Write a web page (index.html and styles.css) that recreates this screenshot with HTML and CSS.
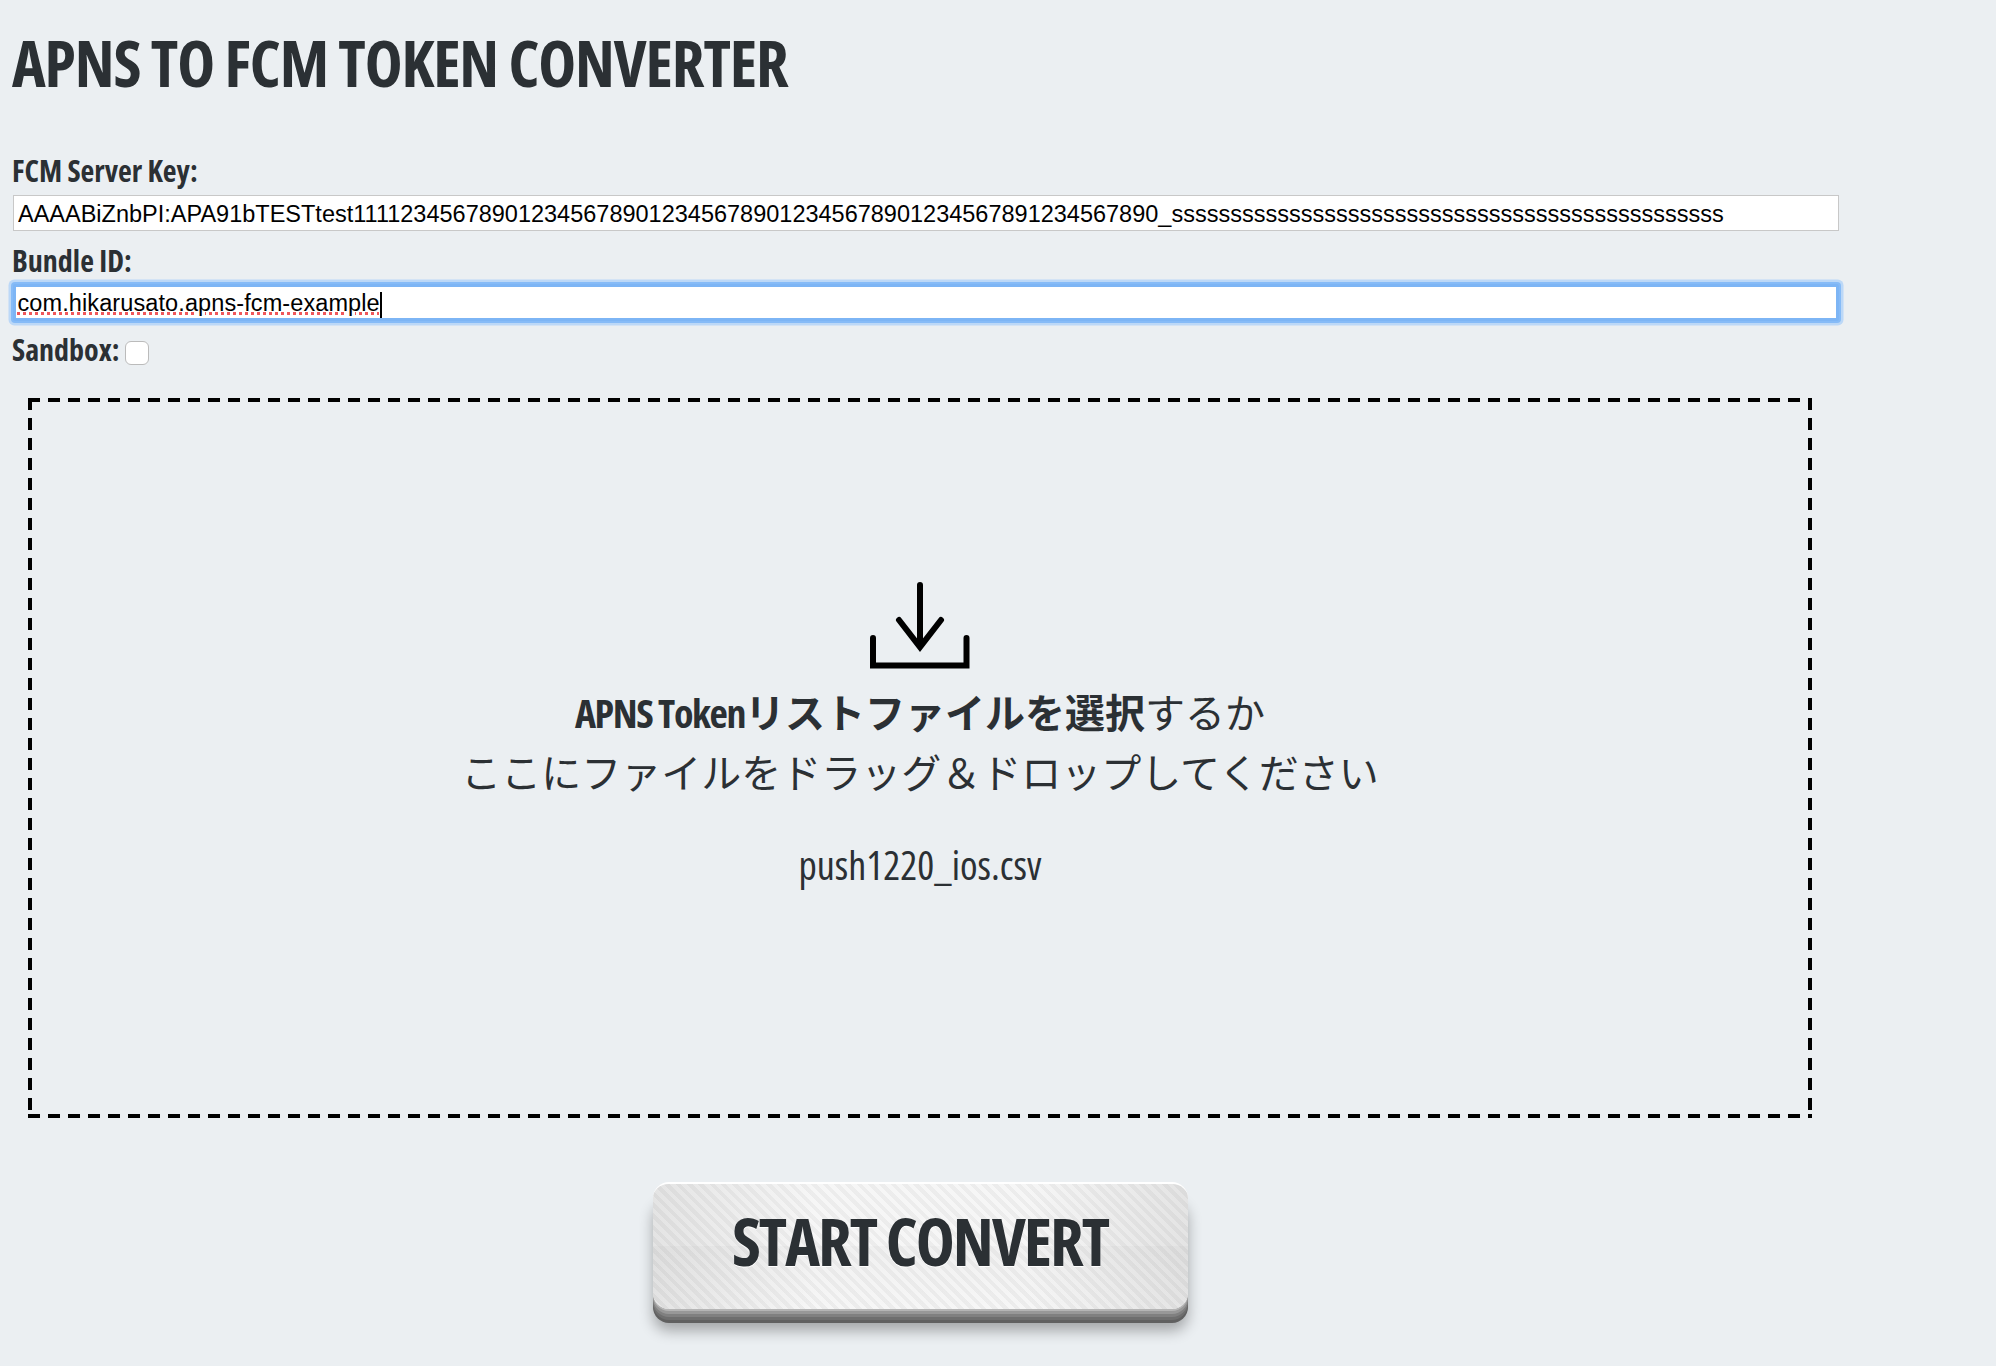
FILE: index.html
```html
<!DOCTYPE html>
<html lang="en">
<head>
    <meta charset="UTF-8">
    <title>APNS to FCM Token Converter</title>
    <link rel="stylesheet" href="styles.css">
</head>
<body>

    <h1>APNS TO FCM TOKEN CONVERTER</h1>

    <form class="converter">
        <label class="field-label" for="server-key">FCM Server Key:</label>
        <input class="text-input" type="text" id="server-key" value="AAAABiZnbPI:APA91bTESTtest11112345678901234567890123456789012345678901234567891234567890_sssssssssssssssssssssssssssssssssssssssssssssss">

        <label class="field-label bundle-label">Bundle ID:</label>
        <div class="text-input focused"><span class="misspelled">com.hikarusato.apns-fcm-example</span><span class="caret"></span></div>

        <div class="sandbox-row">
            <label class="field-label" for="sandbox">Sandbox:</label>
            <input class="sandbox-check" type="checkbox" id="sandbox">
        </div>

        <div class="drop-zone">
            <svg class="drop-icon" width="100" height="87" viewBox="0 0 100 87">
                <path d="M50 3V64M29 38L50 65L71 38" fill="none" stroke="#000" stroke-width="6" stroke-linecap="round"/>
                <path d="M3 56V83.500H96.500V56" fill="none" stroke="#000" stroke-width="6" stroke-linecap="round"/>
            </svg>
            <p class="drop-text"><b><span class="token-name">APNS Token</span>リストファイルを選択</b>するか<br>ここにファイルをドラッグ＆ドロップしてください</p>
            <p class="file-name">push1220_ios.csv</p>
        </div>

        <div class="button-row">
            <button class="convert-btn" type="button">START CONVERT</button>
        </div>
    </form>

</body>
</html>
```

FILE: styles.css
```css
html, body {
    height: 100%;
    margin: 0;
    padding: 0;
}
body {
    background-color: #ebeff2;
    color: #2b3034;
    font-family: "Open Sans", "Noto Sans CJK JP", sans-serif;
    font-stretch: 75%;
    overflow: hidden;
}
h1 {
    margin: 0;
    padding: 25px 0 0 12px;
    height: 122px;
    box-sizing: border-box;
    font-size: 64px;
    line-height: 76px;
    letter-spacing: -1.1px;
    font-weight: bold;
    white-space: nowrap;
}
.converter {
    width: 1826px;
    margin-left: 13px;
    padding-top: 28px;
}
.field-label {
    display: block;
    margin-left: -1px;
    margin-bottom: 4px;
    height: 41px;
    font-size: 30px;
    line-height: 41px;
    font-weight: bold;
}
.bundle-label {
    margin-top: 11px;
    margin-bottom: 5px;
    height: 37px;
    line-height: 37px;
}
.text-input {
    display: block;
    box-sizing: border-box;
    width: 100%;
    height: 36px;
    padding: 2px 4px 0;
    border: 1px solid #c8c8c8;
    background-color: #fff;
    color: #000;
    font-family: "Liberation Sans", Arial, sans-serif;
    font-stretch: normal;
    font-size: 23.5px;
    line-height: 32px;
    outline: none;
    white-space: nowrap;
}
.focused {
    height: 37px;
    padding: 2px 1.500px 0;
    border: 3.500px solid #7db5f5;
    border-radius: 2px;
    line-height: 28px;
    box-shadow: 0 0 0 2px #86bbf7, 0 0 0 4.500px #bcd8f7;
}
.misspelled {
    letter-spacing: 0.1px;
    text-decoration: underline dotted #f0575b 3px;
    text-underline-offset: 1px;
}
.caret {
    display: inline-block;
    width: 2px;
    height: 26px;
    background-color: #000;
    vertical-align: middle;
}
.sandbox-row {
    display: flex;
    align-items: center;
    gap: 5px;
    margin-top: 9px;
    height: 38px;
}
.sandbox-row .field-label {
    margin-bottom: 0;
}
.sandbox-check {
    appearance: none;
    box-sizing: border-box;
    width: 24px;
    height: 24px;
    margin: 7px 0 0;
    border: 1px solid #bbb;
    border-radius: 6px;
    background-color: #fff;
}
.drop-zone {
    display: flex;
    flex-direction: column;
    align-items: center;
    box-sizing: border-box;
    width: 1784px;
    height: 720px;
    margin: 30px 0 0 15px;
    padding-top: 184px;
    background-image:
        repeating-linear-gradient(90deg, #000 0, #000 12px, transparent 12px, transparent 20px),
        repeating-linear-gradient(90deg, #000 0, #000 12px, transparent 12px, transparent 20px),
        repeating-linear-gradient(180deg, #000 0, #000 12px, transparent 12px, transparent 20px),
        repeating-linear-gradient(180deg, #000 0, #000 12px, transparent 12px, transparent 20px);
    background-size: 100% 4px, 100% 4px, 4px 100%, 4px 100%;
    background-position: top left, bottom left, top left, top right;
    background-repeat: no-repeat;
}
.drop-icon {
    display: block;
}
.drop-text {
    margin: 14px 0 0;
    font-size: 40px;
    line-height: 60px;
    text-align: center;
    white-space: nowrap;
}
.token-name {
    letter-spacing: -1.4px;
}
.file-name {
    margin: 32px 0 0;
    font-size: 40px;
    line-height: 60px;
}
.button-row {
    display: flex;
    justify-content: center;
    margin-top: 64px;
    padding-right: 12px;
}
.convert-btn {
    width: 535px;
    height: 127px;
    padding: 0 0 14px;
    border: 0;
    border-top: 2px solid #fff;
    border-radius: 16px;
    color: #2b3034;
    font-family: inherit;
    font-stretch: inherit;
    font-size: 66px;
    font-weight: bold;
    letter-spacing: -2px;
    white-space: nowrap;
    text-shadow: 0 1px 0 #fff;
    background-color: #ececec;
    background-image:
        repeating-linear-gradient(45deg, rgba(0, 0, 0, 0.04) 0, rgba(0, 0, 0, 0.04) 4px, transparent 4px, transparent 8px),
        linear-gradient(180deg, transparent 0, transparent 50%, rgba(0, 0, 0, 0.025) 50%, transparent 100%),
        linear-gradient(90deg, #e4e4e4 0, #f6f6f6 30%, #f6f6f6 70%, #e4e4e4 100%);
    box-shadow: 0 2px 0 #b5b5b5, 0 5px 0 #989898, 0 8px 0 #808080, 0 11px 0 #6e6e6e, 0 14px 0 #606060, 0 22px 14px rgba(0, 0, 0, 0.3);
}
```
